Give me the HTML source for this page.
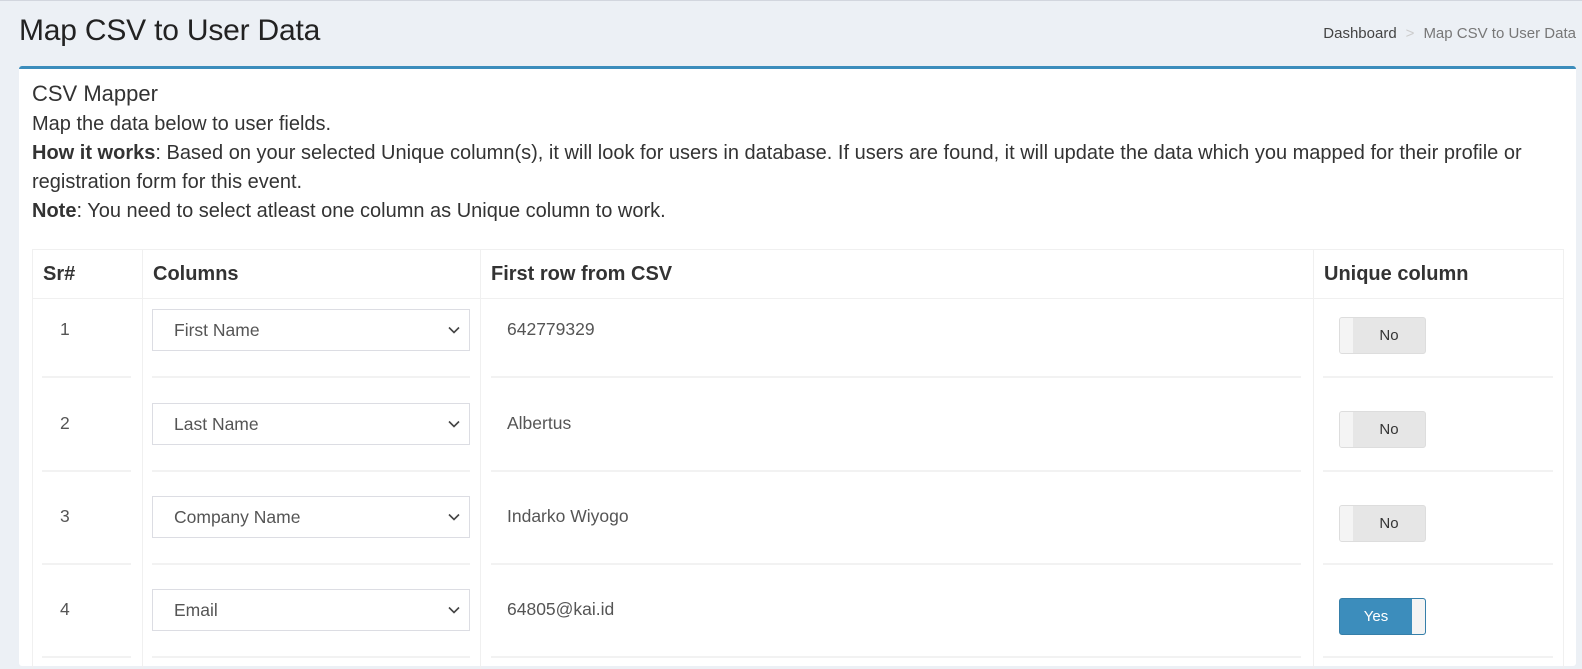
<!DOCTYPE html>
<html><head><meta charset="utf-8"><style>
*{box-sizing:border-box;margin:0;padding:0}
body{width:1582px;height:658px;overflow:hidden;background:#ecf0f5;font-family:"Liberation Sans",Arial,sans-serif;color:#333;position:relative}
.a{position:absolute;white-space:nowrap}
.topline{left:0;top:0;width:1582px;height:1px;background:#d2d6de}
h1{position:absolute;left:19px;top:14px;font-size:30px;font-weight:400;color:#222;letter-spacing:-0.2px}
.bc{right:6px;top:25px;font-size:15px;color:#444}
.bc span.sep{color:#ccc;margin:0 9px}
.bc span.act{color:#777}
.card{left:19px;top:66px;width:1557px;height:600px;background:#fff;border-top:3px solid #3c8dbc;border-radius:3px}
.t{font-size:20px;color:#333;left:32px;line-height:29px}
.vl{width:1px;background:#f0f0f0;top:249px;height:420px}
.hl{height:1px;background:#f0f0f0}
.sep2{height:2px;background:#f2f2f2}
.th{top:263px;font-size:20px;font-weight:bold;color:#333}
.sel{left:152px;width:318px;height:42px;border:1px solid #dcdde3;background:#fff;font-size:17.5px;line-height:20px;color:#555;padding:10px 0 0 21px}
.sel svg{position:absolute;right:9px;top:16px}
.num{left:60px;font-size:17.5px;color:#555}
.val{left:507px;font-size:17.5px;color:#555}
.tg{left:1339px;width:87px;height:37px;border:1px solid #ddd;border-radius:3px;background:#e6e6e6;font-size:15px;color:#333;text-align:center;line-height:35px;overflow:hidden;padding-left:13px}
.tg .h{position:absolute;left:0;top:0;width:13px;height:100%;background:#f4f4f4}
.tg.on{background:#3c8dbc;color:#fff;border-color:#367fa9;padding-left:0;padding-right:13px}
.tg.on .h{left:auto;right:0;background:#f4f4f4;border-radius:0 2px 2px 0}
</style></head><body>
<div class="a topline"></div>
<h1>Map CSV to User Data</h1>
<div class="a bc">Dashboard<span class="sep">&gt;</span><span class="act">Map CSV to User Data</span></div>
<div class="a card"></div>
<div class="a" style="left:32px;top:81px;font-size:22px;color:#333">CSV Mapper</div>
<div class="a t" style="top:110px;white-space:normal;width:1530px">Map the data below to user fields.<br><b>How it works</b>: Based on your selected Unique column(s), it will look for users in database. If users are found, it will update the data which you mapped for their profile or registration form for this event.<br><b>Note</b>: You need to select atleast one column as Unique column to work.</div>

<div class="a hl" style="left:32px;top:249px;width:1532px"></div>
<div class="a hl" style="left:32px;top:298px;width:1532px"></div>
<div class="a vl" style="left:32px"></div>
<div class="a vl" style="left:142px"></div>
<div class="a vl" style="left:480px"></div>
<div class="a vl" style="left:1313px"></div>
<div class="a vl" style="left:1563px"></div>
<div class="a th" style="left:43px">Sr#</div>
<div class="a th" style="left:153px">Columns</div>
<div class="a th" style="left:491px">First row from CSV</div>
<div class="a th" style="left:1324px">Unique column</div>

<div class="a num" style="top:319px">1</div>
<div class="a sel" style="top:309px">First Name<svg width="12" height="8" viewBox="0 0 12 8"><path d="M1 1.5L6 6.5L11 1.5" fill="none" stroke="#444" stroke-width="1.6"/></svg></div>
<div class="a val" style="top:319px">642779329</div>
<div class="a tg" style="top:317px"><div class="h"></div>No</div>

<div class="a num" style="top:413px">2</div>
<div class="a sel" style="top:403px">Last Name<svg width="12" height="8" viewBox="0 0 12 8"><path d="M1 1.5L6 6.5L11 1.5" fill="none" stroke="#444" stroke-width="1.6"/></svg></div>
<div class="a val" style="top:413px">Albertus</div>
<div class="a tg" style="top:411px"><div class="h"></div>No</div>

<div class="a num" style="top:506px">3</div>
<div class="a sel" style="top:496px">Company Name<svg width="12" height="8" viewBox="0 0 12 8"><path d="M1 1.5L6 6.5L11 1.5" fill="none" stroke="#444" stroke-width="1.6"/></svg></div>
<div class="a val" style="top:506px">Indarko Wiyogo</div>
<div class="a tg" style="top:505px"><div class="h"></div>No</div>

<div class="a num" style="top:599px">4</div>
<div class="a sel" style="top:589px">Email<svg width="12" height="8" viewBox="0 0 12 8"><path d="M1 1.5L6 6.5L11 1.5" fill="none" stroke="#444" stroke-width="1.6"/></svg></div>
<div class="a val" style="top:599px">64805@kai.id</div>
<div class="a tg on" style="top:598px"><div class="h"></div>Yes</div>

<div class="a sep2" style="left:42px;width:89px;top:376px"></div>
<div class="a sep2" style="left:152px;width:318px;top:376px"></div>
<div class="a sep2" style="left:491px;width:810px;top:376px"></div>
<div class="a sep2" style="left:1323px;width:230px;top:376px"></div>
<div class="a sep2" style="left:42px;width:89px;top:470px"></div>
<div class="a sep2" style="left:152px;width:318px;top:470px"></div>
<div class="a sep2" style="left:491px;width:810px;top:470px"></div>
<div class="a sep2" style="left:1323px;width:230px;top:470px"></div>
<div class="a sep2" style="left:42px;width:89px;top:563px"></div>
<div class="a sep2" style="left:152px;width:318px;top:563px"></div>
<div class="a sep2" style="left:491px;width:810px;top:563px"></div>
<div class="a sep2" style="left:1323px;width:230px;top:563px"></div>
<div class="a sep2" style="left:42px;width:89px;top:656px"></div>
<div class="a sep2" style="left:152px;width:318px;top:656px"></div>
<div class="a sep2" style="left:491px;width:810px;top:656px"></div>
<div class="a sep2" style="left:1323px;width:230px;top:656px"></div>
</body></html>
